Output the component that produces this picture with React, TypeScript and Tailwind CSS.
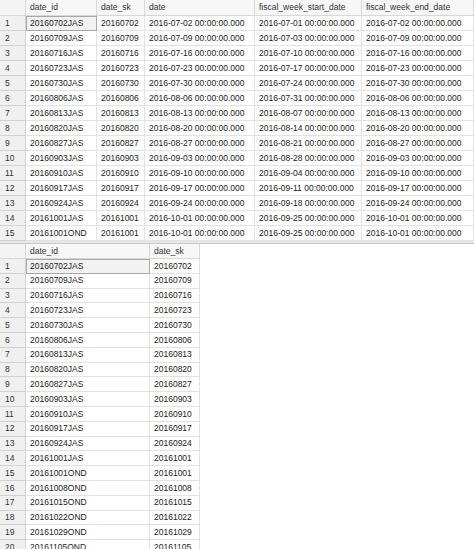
const font = { fontFamily: '"Liberation Sans", Arial, sans-serif' };

type Row = string[];

const weeks = [
  ["20160702JAS", "20160702", "2016-07-02", "2016-07-01", "2016-07-02"],
  ["20160709JAS", "20160709", "2016-07-09", "2016-07-03", "2016-07-09"],
  ["20160716JAS", "20160716", "2016-07-16", "2016-07-10", "2016-07-16"],
  ["20160723JAS", "20160723", "2016-07-23", "2016-07-17", "2016-07-23"],
  ["20160730JAS", "20160730", "2016-07-30", "2016-07-24", "2016-07-30"],
  ["20160806JAS", "20160806", "2016-08-06", "2016-07-31", "2016-08-06"],
  ["20160813JAS", "20160813", "2016-08-13", "2016-08-07", "2016-08-13"],
  ["20160820JAS", "20160820", "2016-08-20", "2016-08-14", "2016-08-20"],
  ["20160827JAS", "20160827", "2016-08-27", "2016-08-21", "2016-08-27"],
  ["20160903JAS", "20160903", "2016-09-03", "2016-08-28", "2016-09-03"],
  ["20160910JAS", "20160910", "2016-09-10", "2016-09-04", "2016-09-10"],
  ["20160917JAS", "20160917", "2016-09-17", "2016-09-11", "2016-09-17"],
  ["20160924JAS", "20160924", "2016-09-24", "2016-09-18", "2016-09-24"],
  ["20161001JAS", "20161001", "2016-10-01", "2016-09-25", "2016-10-01"],
  ["20161001OND", "20161001", "2016-10-01", "2016-09-25", "2016-10-01"],
];

const T = " 00:00:00.000";
const grid1: Row[] = weeks.map(w => [w[0], w[1], w[2] + T, w[3] + T, w[4] + T]);

const grid2: Row[] = [
  ...weeks.map(w => [w[0], w[1]]),
  ["20161008OND", "20161008"],
  ["20161015OND", "20161015"],
  ["20161022OND", "20161022"],
  ["20161029OND", "20161029"],
  ["20161105OND", "20161105"],
];

function Grid({
  cols,
  widths,
  rows,
  rowH,
  headH,
}: {
  cols: string[];
  widths: string[];
  rows: Row[];
  rowH: string;
  headH: string;
}) {
  return (
    <div className="flex flex-col">
      <div className={`flex ${headH}`}>
        <div className="w-[26px] shrink-0 bg-[#f4f4f4] border-r border-b border-[#d8d8d8]" />
        {cols.map((c, i) => (
          <div
            key={c}
            className={`${widths[i]} shrink-0 bg-[#f7f7f7] border-r border-b border-[#d8d8d8] pl-[4px] flex items-center text-[#333]`}
          >
            {c}
          </div>
        ))}
      </div>
      {rows.map((r, ri) => (
        <div key={ri} className={`flex ${rowH}`}>
          <div className="w-[26px] shrink-0 bg-[#f0f0f0] border-r border-b border-[#d2d2d2] pl-[5px] flex items-center text-[#333]">
            {ri + 1}
          </div>
          {r.map((v, ci) => (
            <div
              key={ci}
              className={`${widths[ci]} shrink-0 border-r border-b border-[#e2e2e2] flex items-center text-[#222] ${
                ri === 0 && ci === 0 ? "bg-[#f2f2f2] outline outline-1 outline-[#a8a8a8] -outline-offset-1 pl-[4px]" : "bg-white pl-[4px]"
              }`}
            >
              {v}
            </div>
          ))}
        </div>
      ))}
    </div>
  );
}

export default function App() {
  return (
    <div className="w-[474px] h-[549px] overflow-hidden bg-white text-[8.5px] leading-none" style={font}>
      <Grid
        cols={["date_id", "date_sk", "date", "fiscal_week_start_date", "fiscal_week_end_date"]}
        widths={["w-[71px]", "w-[48px]", "w-[110px]", "w-[107px]", "w-[112px]"]}
        rows={grid1}
        rowH="h-[15px]"
        headH="h-[16px]"
      />
      <div className="h-[3px] bg-[#e8e8e8] border-b border-[#c8c8c8]" />
      <Grid
        cols={["date_id", "date_sk"]}
        widths={["w-[124px]", "w-[50px]"]}
        rows={grid2}
        rowH="h-[14.8px]"
        headH="h-[15px]"
      />
    </div>
  );
}
